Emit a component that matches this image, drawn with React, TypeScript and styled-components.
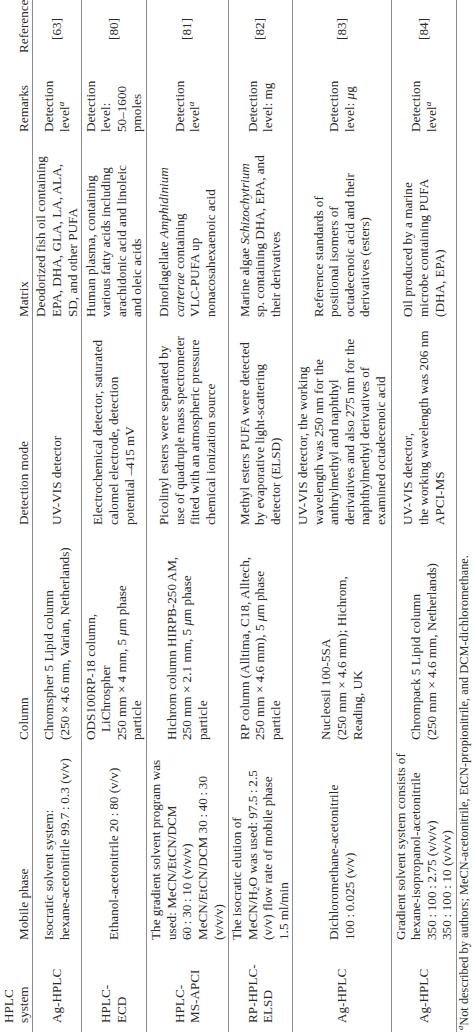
import React from 'react';
import styled, { createGlobalStyle } from 'styled-components';

const Global = createGlobalStyle`
  html, body { margin: 0; padding: 0; background: #ffffff; overflow: hidden; }
  #root { width: 474px; height: 1032px; }
`;

const Page = styled.div`
  width: 474px;
  height: 1032px;
  overflow: hidden;
  background: #ffffff;
`;

/* The printed table is set sideways: it is laid out upright and then turned. */
const Sheet = styled.div`
  width: 1032px;
  height: 474px;
  transform-origin: 0 0;
  transform: translateY(1032px) rotate(-90deg);
  font-family: "Liberation Serif", "Times New Roman", serif;
  font-size: 13.2px;
  line-height: 15.6px;
  color: #2a2a2a;
`;

const Table = styled.table`
  width: 1039px;
  border-collapse: separate;
  border-spacing: 0;
  table-layout: fixed;
`;

const Col = styled.col<{ $w: number }>`
  width: ${(p) => p.$w}px;
`;

const HeadRow = styled.tr`
  height: 32.75px;
`;

const HeadCell = styled.th<{ $pad?: number }>`
  font-weight: normal;
  text-align: left;
  vertical-align: bottom;
  padding: 0 0 0 ${(p) => p.$pad ?? 0}px;
  border-bottom: 1.5px solid #8c8c8c;
  white-space: nowrap;
  overflow: visible;
`;

const Row = styled.tr<{ $h: number }>`
  height: ${(p) => p.$h}px;
`;

const Cell = styled.td<{ $pad?: number }>`
  vertical-align: middle;
  padding: 0 0 0 ${(p) => p.$pad ?? 0}px;
  border-bottom: 1.5px solid #8c8c8c;
  white-space: nowrap;
  overflow: visible;
`;

const Line = styled.span<{ $indent?: number }>`
  display: block;
  padding-left: ${(p) => p.$indent ?? 0}px;
`;

const Sup = styled.sup`
  font-style: italic;
  font-size: 0.68em;
  line-height: 0;
  vertical-align: 0.55em;
`;

const Sub = styled.sub`
  font-size: 0.68em;
  line-height: 0;
  vertical-align: -0.25em;
`;

const Note = styled.p`
  margin: 0;
  padding: 0 0 0 2px;
  font-size: 12.4px;
  line-height: 15px;
  white-space: nowrap;
`;

const mu = <i>μ</i>;
const ratio = '\u2009:\u2009';

type Lines = React.ReactNode[];

interface Entry {
  h: number;
  system: Lines;
  mobile: Lines;
  column: Lines;
  columnIndent?: number;
  detection: Lines;
  matrix: Lines;
  remarks: Lines;
  ref: string;
}

const levelA = (
  <>
    level<Sup>a</Sup>
  </>
);

const rows: Entry[] = [
  {
    h: 49,
    system: ['Ag-HPLC'],
    mobile: ['Isocratic solvent system:', `hexane-acetonitrile 99.7${ratio}0.3 (v/v)`],
    column: ['Chromspher 5 Lipid column', '(250\u2009×\u20094.6 mm, Varian, Netherlands)'],
    detection: ['UV-VIS detector'],
    matrix: ['Deodorized fish oil containing', 'EPA, DHA, GLA, LA, ALA,', 'SD, and other PUFA'],
    remarks: ['Detection', levelA],
    ref: '[63]',
  },
  {
    h: 65,
    system: ['HPLC-', 'ECD'],
    mobile: [`Ethanol-acetonitrile 20${ratio}80 (v/v)`],
    column: [
      'ODS100RP-18 column,',
      'LiChrospher',
      <>250 mm × 4 mm, 5 {mu}m phase</>,
      'particle',
    ],
    columnIndent: 1,
    detection: [
      'Electrochemical detector, saturated',
      'calomel electrode, detection',
      'potential –415 mV',
    ],
    matrix: [
      'Human plasma, containing',
      'various fatty acids including',
      'arachidonic acid and linoleic',
      'and oleic acids',
    ],
    remarks: ['Detection', 'level:', '50–1600', 'pmoles'],
    ref: '[80]',
  },
  {
    h: 82,
    system: ['HPLC-', 'MS-APCI'],
    mobile: [
      'The gradient solvent program was',
      'used: MeCN/EtCN/DCM',
      `60${ratio}30${ratio}10 (v/v/v)`,
      `MeCN/EtCN/DCM 30${ratio}40${ratio}30`,
      '(v/v/v)',
    ],
    column: [
      'Hichrom column HIRPB-250 AM,',
      <>250 mm × 2.1 mm, 5 {mu}m phase</>,
      'particle',
    ],
    detection: [
      'Picolinyl esters were separated by',
      'use of quadruple mass spectrometer',
      'fitted with an atmospheric pressure',
      'chemical ionization source',
    ],
    matrix: [
      <>Dinoflagellate <i>Amphidinium</i></>,
      <><i>carterae</i> containing</>,
      'VLC-PUFA up',
      'nonacosahexaenoic acid',
    ],
    remarks: ['Detection', levelA],
    ref: '[81]',
  },
  {
    h: 64,
    system: ['RP-HPLC-', 'ELSD'],
    mobile: [
      'The isocratic elution of',
      <>
        MeCN/H<Sub>2</Sub>O was used: 97.5{ratio}2.5
      </>,
      '(v/v) flow rate of mobile phase',
      '1.5 ml/min',
    ],
    column: [
      'RP column (Alltima, C18, Alltech,',
      <>250 mm × 4.6 mm), 5 {mu}m phase</>,
      'particle',
    ],
    detection: [
      'Methyl esters PUFA were detected',
      'by evaporative light-scattering',
      'detector (ELSD)',
    ],
    matrix: [
      <>Marine algae <i>Schizochytrium</i></>,
      'sp. containing DHA, EPA, and',
      'their derivatives',
    ],
    remarks: ['Detection', 'level: mg'],
    ref: '[82]',
  },
  {
    h: 99,
    system: ['Ag-HPLC'],
    mobile: ['Dichloromethane-acetonitrile', `100${ratio}0.025 (v/v)`],
    column: ['Nucleosil 100-5SA', '(250 mm × 4.6 mm); Hichrom,', 'Reading, UK'],
    detection: [
      'UV-VIS detector, the working',
      'wavelength was 250 nm for the',
      'anthrylmethyl and naphthyl',
      'derivatives and also 275 nm for the',
      'naphthylmethyl derivatives of',
      'examined octadecenoic acid',
    ],
    matrix: [
      'Reference standards of',
      'positional isomers of',
      'octadecenoic acid and their',
      'derivatives (esters)',
    ],
    remarks: ['Detection', <>level: {mu}g</>],
    ref: '[83]',
  },
  {
    h: 65,
    system: ['Ag-HPLC'],
    mobile: [
      'Gradient solvent system consists of',
      'hexane-isopropanol-acetonitrile',
      `350${ratio}100${ratio}2.75 (v/v/v)`,
      `350${ratio}100${ratio}10 (v/v/v)`,
    ],
    column: ['Chrompack 5 Lipid column', '(250 mm × 4.6 mm, Netherlands)'],
    detection: [
      'UV-VIS detector,',
      'the working wavelength was 206 nm',
      'APCI-MS',
    ],
    matrix: ['Oil produced by a marine', 'microbe containing PUFA', '(DHA, EPA)'],
    remarks: ['Detection', levelA],
    ref: '[84]',
  },
];

const LineStack: React.FC<{ items: Lines; indentAt?: number; indent?: number }> = ({
  items,
  indentAt,
  indent,
}) => (
  <>
    {items.map((item, i) => (
      <Line key={i} $indent={i === indentAt ? indent : 0}>
        {item}
      </Line>
    ))}
  </>
);

export default function App() {
  return (
    <Page>
      <Global />
      <Sheet>
        <Table>
          <colgroup>
            <Col $w={92} />
            <Col $w={200} />
            <Col $w={215} />
            <Col $w={208} />
            <Col $w={185} />
            <Col $w={79} />
            <Col $w={60} />
          </colgroup>
          <thead>
            <HeadRow>
              <HeadCell $pad={9}>
                <Line>HPLC</Line>
                <Line>system</Line>
              </HeadCell>
              <HeadCell>Mobile phase</HeadCell>
              <HeadCell>Column</HeadCell>
              <HeadCell>Detection mode</HeadCell>
              <HeadCell>Matrix</HeadCell>
              <HeadCell>Remarks</HeadCell>
              <HeadCell>Reference</HeadCell>
            </HeadRow>
          </thead>
          <tbody>
            {rows.map((r, i) => (
              <Row key={i} $h={r.h}>
                <Cell $pad={9}>
                  <LineStack items={r.system} />
                </Cell>
                <Cell>
                  <LineStack items={r.mobile} />
                </Cell>
                <Cell>
                  <LineStack items={r.column} indentAt={r.columnIndent} indent={8} />
                </Cell>
                <Cell>
                  <LineStack items={r.detection} />
                </Cell>
                <Cell>
                  <LineStack items={r.matrix} />
                </Cell>
                <Cell>
                  <LineStack items={r.remarks} />
                </Cell>
                <Cell $pad={13}>{r.ref}</Cell>
              </Row>
            ))}
          </tbody>
        </Table>
        <Note>
          <Sup>a</Sup>Not described by authors; MeCN-acetonitrile, EtCN-propionitrile, and
          DCM-dichloromethane.
        </Note>
      </Sheet>
    </Page>
  );
}
